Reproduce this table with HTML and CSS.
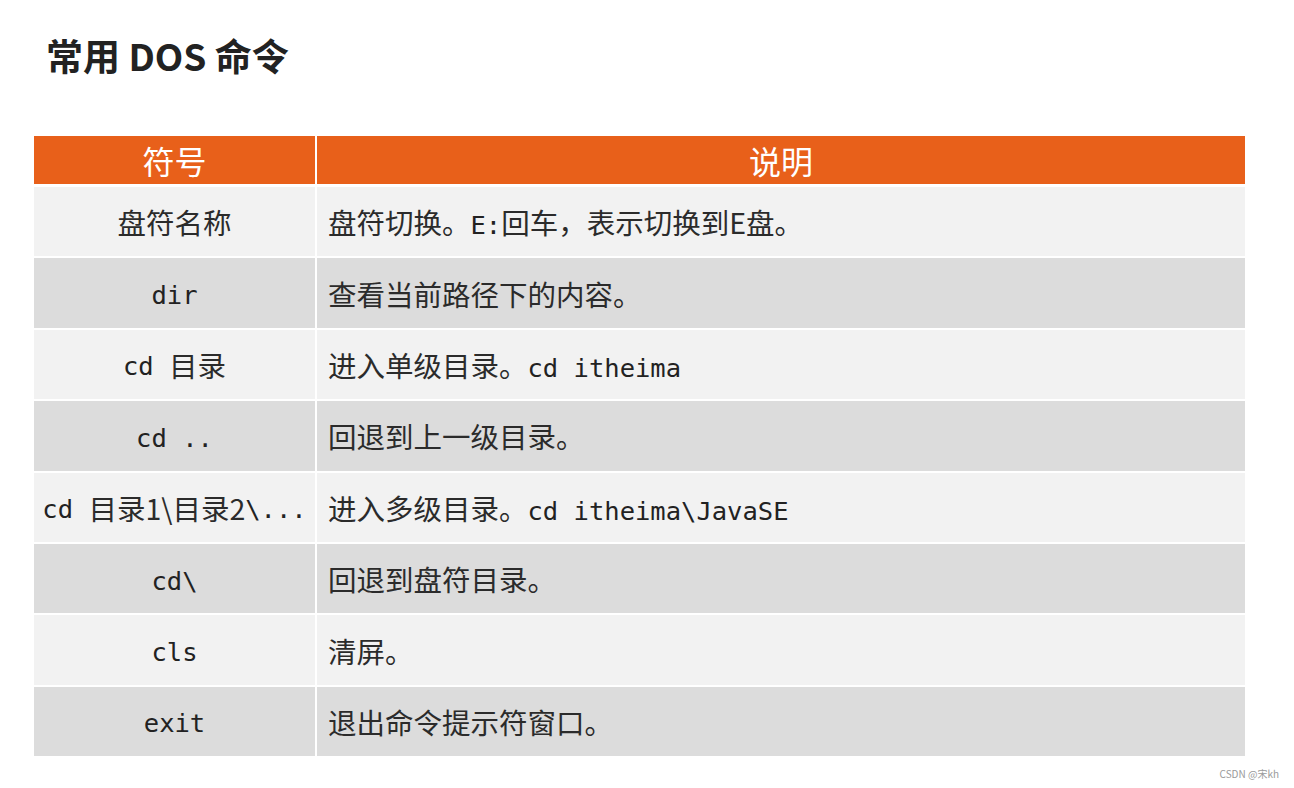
FILE: index.html
```html
<!DOCTYPE html>
<html lang="zh-CN">
<head>
<meta charset="utf-8">
<title>常用 DOS 命令</title>
<link rel="stylesheet" href="styles.css">
</head>
<body>
<div class="slide">
  <h1 class="title">常用 DOS 命令</h1>
  <div class="table">
    <div class="th">符号</div>
    <div class="th">说明</div>

    <div class="cell sym light">盘符名称</div>
    <div class="cell desc light"><p class="line">盘符切换。<span class="mono">E:</span>回车，表示切换到E盘。</p></div>

    <div class="cell sym dark"><span class="mono">dir</span></div>
    <div class="cell desc dark"><p class="line">查看当前路径下的内容。</p></div>

    <div class="cell sym light"><span class="mono">cd </span>目录</div>
    <div class="cell desc light"><p class="line">进入单级目录。<span class="mono">cd itheima</span></p></div>

    <div class="cell sym dark"><span class="mono">cd ..</span></div>
    <div class="cell desc dark"><p class="line">回退到上一级目录。</p></div>

    <div class="cell sym light"><span class="mono">cd </span>目录1\目录2<span class="mono">\...</span></div>
    <div class="cell desc light"><p class="line">进入多级目录。<span class="mono">cd itheima\JavaSE</span></p></div>

    <div class="cell sym dark"><span class="mono">cd\</span></div>
    <div class="cell desc dark"><p class="line">回退到盘符目录。</p></div>

    <div class="cell sym light"><span class="mono">cls</span></div>
    <div class="cell desc light"><p class="line">清屏。</p></div>

    <div class="cell sym dark"><span class="mono">exit</span></div>
    <div class="cell desc dark"><p class="line">退出命令提示符窗口。</p></div>
  </div>
  <div class="watermark">CSDN @宋kh</div>
</div>
</body>
</html>
```

FILE: styles.css
```css
html, body {
  margin: 0;
  padding: 0;
  background: #ffffff;
}

.slide {
  width: 1294px;
  height: 788px;
  position: relative;
  font-family: "Noto Sans CJK SC", "Noto Sans", sans-serif;
  color: #2b2b2b;
}

.title {
  margin: 0;
  padding: 30px 0 0 46px;
  height: 136px;
  box-sizing: border-box;
  font-size: 37px;
  line-height: 50px;
  font-weight: 700;
  color: #222222;
}

.table {
  margin-left: 34px;
  width: 1211px;
  display: grid;
  grid-template-columns: 281px 928px;
  grid-template-rows: 49px repeat(8, 69.4px);
  column-gap: 2px;
  row-gap: 2px;
}

.th {
  background: #e8601a;
  color: #ffffff;
  font-size: 32px;
  display: flex;
  align-items: center;
  justify-content: center;
  margin-bottom: 1px;
}

.cell {
  display: flex;
  align-items: center;
  font-size: 28.5px;
  white-space: pre;
}

.sym {
  justify-content: center;
}

.desc {
  padding-left: 11px;
}

.line {
  margin: 0;
}

.light {
  background: #f2f2f2;
}

.dark {
  background: #dcdcdc;
}

.mono {
  font-family: "DejaVu Sans Mono", "Noto Sans CJK SC", monospace;
  font-size: 25.5px;
  white-space: pre;
  color: #222222;
}

.sym .mono {
  padding-top: 4px;
}

.watermark {
  position: absolute;
  right: 15px;
  top: 766px;
  font-family: "Noto Sans CJK SC", sans-serif;
  font-size: 10px;
  color: #9a9a9a;
}
```
